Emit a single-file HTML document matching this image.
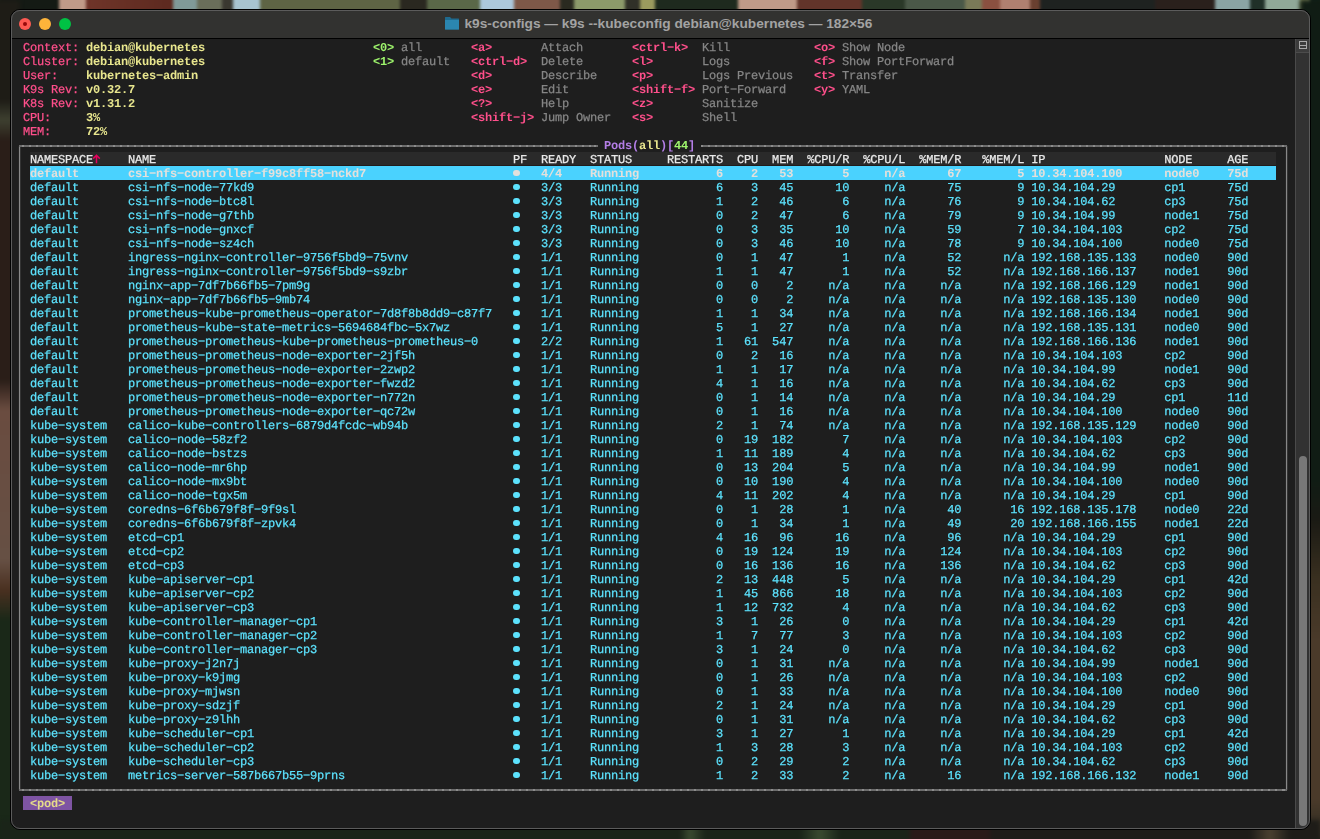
<!DOCTYPE html>
<html><head><meta charset="utf-8">
<style>
html,body{margin:0;padding:0;width:1320px;height:839px;overflow:hidden;background:#1a2418;position:relative;}
.a{position:absolute;}
.topstrip{left:0;top:-6px;width:1320px;height:26px;filter:blur(1.5px);background:linear-gradient(to right,
#141a14 0px,#141a14 59px,#c09a88 59px,#c09a88 86px,#6a2e26 86px,#6e3428 90px,#5e2a20 165px,#5e2a20 173px,#809a98 173px,#809a98 197px,#6a6e5a 197px,#6a6e5a 222px,#3a3830 222px,#3a3830 233px,#a8c4d0 233px,#a8c4d0 260px,#5e6444 260px,#5e6444 400px,#2a2820 400px,#2a2820 427px,#5a6848 427px,#5a6848 480px,#acc8dc 480px,#acc8dc 514px,#7e5848 514px,#7e5848 560px,#2a2a20 560px,#2a2a20 574px,#8c9a6a 574px,#8c9a6a 625px,#303028 625px,#303028 640px,#9a9a5e 640px,#9a9a5e 655px,#1e2a1e 655px,#1e2a1e 738px,#c09a88 738px,#c09a88 797px,#62342a 797px,#62342a 862px,#2a3828 862px,#2a3828 905px,#4a5848 905px,#4a5848 965px,#7a7a58 965px,#7a7a58 982px,#8a5040 982px,#8a5040 1000px,#b08070 1000px,#b08070 1030px,#6a4030 1030px,#6a4030 1040px,#1e2220 1040px,#1e2220 1155px,#2a201c 1155px,#2a201c 1215px,#8aa4a4 1215px,#8aa4a4 1250px,#203028 1250px,#203028 1265px,#90a898 1265px,#90a898 1300px,#80885a 1300px,#80885a 1310px,#102018 1310px);}
.leftstrip{left:-6px;top:0;width:26px;height:839px;filter:blur(2px);background:linear-gradient(to bottom,#1e1c16 0px,#1e1c16 100px,#3e4030 120px,#2a1e18 140px,#2a1e18 380px,#6a4c40 410px,#665044 560px,#4a3020 590px,#1a2818 620px,#1a2818 839px);}
.rightstrip{left:1300px;top:0;width:26px;height:839px;filter:blur(2px);background:linear-gradient(to bottom,#101c14 0px,#101c14 480px,#1a1a14 520px,#3a3020 580px,#4a3a2a 640px,#4a3a2a 800px,#2a2a20 839px);}
.botstrip{left:0;top:820px;width:1320px;height:26px;filter:blur(2px);background:linear-gradient(to right,#1a2418 0px,#1a2418 680px,#3a4a30 690px,#1a2418 705px,#1a2418 800px,#3a4a30 820px,#1a2418 840px,#1a2418 910px,#2a1a18 910px,#2a1a18 990px,#1e1c18 990px,#1e1c18 1250px,#4a4030 1270px,#1e1c18 1290px);}
.win{left:10px;top:9px;width:1301px;height:821px;border-radius:10px;background:#1e1e1e;border:1px solid #000;box-sizing:border-box;overflow:hidden;}
.winhl{left:11px;top:10px;width:1299px;height:819px;border-radius:9px;border:1px solid #5c5c5c;box-sizing:border-box;}
.tb{left:11px;top:10px;width:1299px;height:28px;background:#323230;border-radius:9px 9px 0 0;}
.tbsep{left:11px;top:38px;width:1299px;height:1px;background:#000;}
.dot{top:17.75px;width:12.5px;height:12.5px;border-radius:50%;}
.title{left:464.5px;top:15px;font-family:"Liberation Sans",sans-serif;font-weight:bold;font-size:13.7px;color:#a3a3a3;white-space:pre;line-height:18px;}
.r{position:absolute;height:14px;line-height:14px;padding-top:1px;box-sizing:border-box;font-family:"Liberation Mono",monospace;font-size:12px;letter-spacing:-0.2px;white-space:pre;text-rendering:geometricPrecision;color:#5ce2fd;}
.r{-webkit-text-stroke:0.25px currentColor;}
.b{font-weight:bold;-webkit-text-stroke:0;}
.pk{color:#ff4f8b;}
.pk2{color:#e0207a;}
.yl{color:#e8e68e;}
.gn{color:#9ef46c;}
.gy{color:#868686;}
.pu{color:#b47ee6;}
.cy{color:#5ce2fd;}
.hd{background:linear-gradient(#2a2a2a 0,#2a2a2a 13px,#211c1c 13px);color:#e8e8e8;width:1246px;}
.sel{background:#4ad2fe;color:#e4e0dc;width:1246px;}
.pod{background:#7e54a3;color:#e6dc8a;width:49px;}
.bul{left:513.25px;width:6.5px;height:6.5px;border-radius:50%;background:#5ce2fd;}
.bs{background:#e4e0dc;}
.fl{background:linear-gradient(to right,#262626 0,#262626 1px,#888 1px,#888 2px,#343434 2px);}
.flh{background:repeating-linear-gradient(to right,#8c8c8c 0,#8c8c8c 2px,#6c6c6c 2px,#6c6c6c 7px);}
.sbtrack{left:1295px;top:39px;width:15px;height:790px;border-bottom-right-radius:10px;background:#323232;border-left:1px solid #4a4a4a;box-sizing:border-box;}
.sbbtn{left:1296px;top:39px;width:13px;height:13px;background:#3c3c3c;border-bottom:1px solid #4c4c4c;box-sizing:content-box;}
.sbicon{left:1299px;top:41px;width:8px;height:8px;border:1px solid #a8a8a8;box-sizing:border-box;}
.sbthumb{left:1299px;top:456px;width:8px;height:370px;border-radius:4px;background:#787878;}
</style></head><body>
<div class="a topstrip"></div>
<div class="a leftstrip"></div>
<div class="a rightstrip"></div>
<div class="a botstrip"></div>
<div class="a win"></div>
<div class="a tb"></div>
<div class="a tbsep"></div>
<div class="a dot" style="left:18.75px;background:#fe5a52;"></div>
<div class="a" style="left:23px;top:22px;width:4px;height:4px;border-radius:50%;background:#98090b;"></div>
<div class="a dot" style="left:38.75px;background:#fdb43a;"></div>
<div class="a dot" style="left:58.75px;background:#00c244;"></div>
<svg class="a" style="left:444px;top:16px" width="16" height="14" viewBox="0 0 16 14">
  <path d="M1 1.5 Q1 1 1.5 1 L6 1 L7.5 2.5 L14.5 2.5 Q15 2.5 15 3 L15 13 Q15 13.5 14.5 13.5 L1.5 13.5 Q1 13.5 1 13 Z" fill="#1f6a8e"/>
  <path d="M1 4 L15 4 L15 13 Q15 13.5 14.5 13.5 L1.5 13.5 Q1 13.5 1 13 Z" fill="#2b86b0"/>
</svg>
<div class="a title">k9s-configs — k9s --kubeconfig debian@kubernetes — 182×56</div>
<div class="a sbtrack"></div>
<div class="a sbbtn"></div>
<div class="a sbicon"><div class="a" style="left:0;top:3px;width:6px;height:1px;background:#a8a8a8"></div></div>
<div class="a sbthumb"></div>
<!-- frame -->
<div class="a fl" style="left:18px;top:146px;width:3px;height:644px;"></div>
<div class="a fl" style="left:1285px;top:146px;width:3px;height:644px;"></div>
<div class="a flh" style="left:19px;top:145px;width:579px;height:2px;background-position:-4px 0"></div>
<div class="a flh" style="left:701px;top:145px;width:586px;height:2px;background-position:0 0"></div>
<div class="a flh" style="left:19px;top:789px;width:1268px;height:2px;background-position:-4px 0"></div>
<div class="a" style="left:0;top:0;width:1320px;height:839px;will-change:transform">
<div class="r " style="top:40px;left:23px"><span class="pk">Context: </span><span class="yl b">debian@kubernetes</span></div>
<div class="r " style="top:54px;left:23px"><span class="pk">Cluster: </span><span class="yl b">debian@kubernetes</span></div>
<div class="r " style="top:68px;left:23px"><span class="pk">User:    </span><span class="yl b">kubernetes−admin</span></div>
<div class="r " style="top:82px;left:23px"><span class="pk">K9s Rev: </span><span class="yl b">v0.32.7</span></div>
<div class="r " style="top:96px;left:23px"><span class="pk">K8s Rev: </span><span class="yl b">v1.31.2</span></div>
<div class="r " style="top:110px;left:23px"><span class="pk">CPU:     </span><span class="yl b">3%</span></div>
<div class="r " style="top:124px;left:23px"><span class="pk">MEM:     </span><span class="yl b">72%</span></div>
<div class="r " style="top:40px;left:373px"><span class="gn b">&lt;0&gt;</span> <span class="gy">all</span></div>
<div class="r " style="top:54px;left:373px"><span class="gn b">&lt;1&gt;</span> <span class="gy">default</span></div>
<div class="r " style="top:40px;left:471px"><span class="pk b">&lt;a&gt;       </span><span class="gy">Attach</span></div>
<div class="r " style="top:54px;left:471px"><span class="pk b">&lt;ctrl−d&gt;  </span><span class="gy">Delete</span></div>
<div class="r " style="top:68px;left:471px"><span class="pk b">&lt;d&gt;       </span><span class="gy">Describe</span></div>
<div class="r " style="top:82px;left:471px"><span class="pk b">&lt;e&gt;       </span><span class="gy">Edit</span></div>
<div class="r " style="top:96px;left:471px"><span class="pk b">&lt;?&gt;       </span><span class="gy">Help</span></div>
<div class="r " style="top:110px;left:471px"><span class="pk b">&lt;shift−j&gt; </span><span class="gy">Jump Owner</span></div>
<div class="r " style="top:40px;left:632px"><span class="pk b">&lt;ctrl−k&gt;  </span><span class="gy">Kill</span></div>
<div class="r " style="top:54px;left:632px"><span class="pk b">&lt;l&gt;       </span><span class="gy">Logs</span></div>
<div class="r " style="top:68px;left:632px"><span class="pk b">&lt;p&gt;       </span><span class="gy">Logs Previous</span></div>
<div class="r " style="top:82px;left:632px"><span class="pk b">&lt;shift−f&gt; </span><span class="gy">Port−Forward</span></div>
<div class="r " style="top:96px;left:632px"><span class="pk b">&lt;z&gt;       </span><span class="gy">Sanitize</span></div>
<div class="r " style="top:110px;left:632px"><span class="pk b">&lt;s&gt;       </span><span class="gy">Shell</span></div>
<div class="r " style="top:40px;left:814px"><span class="pk b">&lt;o&gt;</span> <span class="gy">Show Node</span></div>
<div class="r " style="top:54px;left:814px"><span class="pk b">&lt;f&gt;</span> <span class="gy">Show PortForward</span></div>
<div class="r " style="top:68px;left:814px"><span class="pk b">&lt;t&gt;</span> <span class="gy">Transfer</span></div>
<div class="r " style="top:82px;left:814px"><span class="pk b">&lt;y&gt;</span> <span class="gy">YAML</span></div>
<div class="r " style="top:138px;left:604px"><span class="pu b">Pods(</span><span class="yl b">all</span><span class="pu b">)[</span><span class="gn b">44</span><span class="pu b">]</span></div>
<div class="r hd" style="top:152px;left:30px">NAMESPACE     NAME                                                   PF  READY  STATUS     RESTARTS  CPU  MEM  %CPU/R  %CPU/L  %MEM/R   %MEM/L IP                 NODE     AGE    </div>
<svg class="a" style="left:92px;top:154px" width="9" height="10" viewBox="0 0 9 10"><path d="M4.5 1.2V9.2M1.2 4.6L4.5 1.3L7.8 4.6" stroke="#e5005c" stroke-width="1.5" fill="none"/></svg>
<div class="r sel b" style="top:166px;left:30px">default       csi−nfs−controller−f99c8ff58−nckd7                         4/4    Running           6    2   53       5     n/a      67        5 10.34.104.100      node0    75d    </div>
<div class="a bul bs" style="top:169.5px"></div>
<div class="r cy" style="top:180px;left:30px">default       csi−nfs−node−77kd9                                         3/3    Running           6    3   45      10     n/a      75        9 10.34.104.29       cp1      75d    </div>
<div class="a bul " style="top:183.5px"></div>
<div class="r cy" style="top:194px;left:30px">default       csi−nfs−node−btc8l                                         3/3    Running           1    2   46       6     n/a      76        9 10.34.104.62       cp3      75d    </div>
<div class="a bul " style="top:197.5px"></div>
<div class="r cy" style="top:208px;left:30px">default       csi−nfs−node−g7thb                                         3/3    Running           0    2   47       6     n/a      79        9 10.34.104.99       node1    75d    </div>
<div class="a bul " style="top:211.5px"></div>
<div class="r cy" style="top:222px;left:30px">default       csi−nfs−node−gnxcf                                         3/3    Running           0    3   35      10     n/a      59        7 10.34.104.103      cp2      75d    </div>
<div class="a bul " style="top:225.5px"></div>
<div class="r cy" style="top:236px;left:30px">default       csi−nfs−node−sz4ch                                         3/3    Running           0    3   46      10     n/a      78        9 10.34.104.100      node0    75d    </div>
<div class="a bul " style="top:239.5px"></div>
<div class="r cy" style="top:250px;left:30px">default       ingress−nginx−controller−9756f5bd9−75vnv                   1/1    Running           0    1   47       1     n/a      52      n/a 192.168.135.133    node0    90d    </div>
<div class="a bul " style="top:253.5px"></div>
<div class="r cy" style="top:264px;left:30px">default       ingress−nginx−controller−9756f5bd9−s9zbr                   1/1    Running           1    1   47       1     n/a      52      n/a 192.168.166.137    node1    90d    </div>
<div class="a bul " style="top:267.5px"></div>
<div class="r cy" style="top:278px;left:30px">default       nginx−app−7df7b66fb5−7pm9g                                 1/1    Running           0    0    2     n/a     n/a     n/a      n/a 192.168.166.129    node1    90d    </div>
<div class="a bul " style="top:281.5px"></div>
<div class="r cy" style="top:292px;left:30px">default       nginx−app−7df7b66fb5−9mb74                                 1/1    Running           0    0    2     n/a     n/a     n/a      n/a 192.168.135.130    node0    90d    </div>
<div class="a bul " style="top:295.5px"></div>
<div class="r cy" style="top:306px;left:30px">default       prometheus−kube−prometheus−operator−7d8f8b8dd9−c87f7       1/1    Running           1    1   34     n/a     n/a     n/a      n/a 192.168.166.134    node1    90d    </div>
<div class="a bul " style="top:309.5px"></div>
<div class="r cy" style="top:320px;left:30px">default       prometheus−kube−state−metrics−5694684fbc−5x7wz             1/1    Running           5    1   27     n/a     n/a     n/a      n/a 192.168.135.131    node0    90d    </div>
<div class="a bul " style="top:323.5px"></div>
<div class="r cy" style="top:334px;left:30px">default       prometheus−prometheus−kube−prometheus−prometheus−0         2/2    Running           1   61  547     n/a     n/a     n/a      n/a 192.168.166.136    node1    90d    </div>
<div class="a bul " style="top:337.5px"></div>
<div class="r cy" style="top:348px;left:30px">default       prometheus−prometheus−node−exporter−2jf5h                  1/1    Running           0    2   16     n/a     n/a     n/a      n/a 10.34.104.103      cp2      90d    </div>
<div class="a bul " style="top:351.5px"></div>
<div class="r cy" style="top:362px;left:30px">default       prometheus−prometheus−node−exporter−2zwp2                  1/1    Running           1    1   17     n/a     n/a     n/a      n/a 10.34.104.99       node1    90d    </div>
<div class="a bul " style="top:365.5px"></div>
<div class="r cy" style="top:376px;left:30px">default       prometheus−prometheus−node−exporter−fwzd2                  1/1    Running           4    1   16     n/a     n/a     n/a      n/a 10.34.104.62       cp3      90d    </div>
<div class="a bul " style="top:379.5px"></div>
<div class="r cy" style="top:390px;left:30px">default       prometheus−prometheus−node−exporter−n772n                  1/1    Running           0    1   14     n/a     n/a     n/a      n/a 10.34.104.29       cp1      11d    </div>
<div class="a bul " style="top:393.5px"></div>
<div class="r cy" style="top:404px;left:30px">default       prometheus−prometheus−node−exporter−qc72w                  1/1    Running           0    1   16     n/a     n/a     n/a      n/a 10.34.104.100      node0    90d    </div>
<div class="a bul " style="top:407.5px"></div>
<div class="r cy" style="top:418px;left:30px">kube−system   calico−kube−controllers−6879d4fcdc−wb94b                   1/1    Running           2    1   74     n/a     n/a     n/a      n/a 192.168.135.129    node0    90d    </div>
<div class="a bul " style="top:421.5px"></div>
<div class="r cy" style="top:432px;left:30px">kube−system   calico−node−58zf2                                          1/1    Running           0   19  182       7     n/a     n/a      n/a 10.34.104.103      cp2      90d    </div>
<div class="a bul " style="top:435.5px"></div>
<div class="r cy" style="top:446px;left:30px">kube−system   calico−node−bstzs                                          1/1    Running           1   11  189       4     n/a     n/a      n/a 10.34.104.62       cp3      90d    </div>
<div class="a bul " style="top:449.5px"></div>
<div class="r cy" style="top:460px;left:30px">kube−system   calico−node−mr6hp                                          1/1    Running           0   13  204       5     n/a     n/a      n/a 10.34.104.99       node1    90d    </div>
<div class="a bul " style="top:463.5px"></div>
<div class="r cy" style="top:474px;left:30px">kube−system   calico−node−mx9bt                                          1/1    Running           0   10  190       4     n/a     n/a      n/a 10.34.104.100      node0    90d    </div>
<div class="a bul " style="top:477.5px"></div>
<div class="r cy" style="top:488px;left:30px">kube−system   calico−node−tgx5m                                          1/1    Running           4   11  202       4     n/a     n/a      n/a 10.34.104.29       cp1      90d    </div>
<div class="a bul " style="top:491.5px"></div>
<div class="r cy" style="top:502px;left:30px">kube−system   coredns−6f6b679f8f−9f9sl                                   1/1    Running           0    1   28       1     n/a      40       16 192.168.135.178    node0    22d    </div>
<div class="a bul " style="top:505.5px"></div>
<div class="r cy" style="top:516px;left:30px">kube−system   coredns−6f6b679f8f−zpvk4                                   1/1    Running           0    1   34       1     n/a      49       20 192.168.166.155    node1    22d    </div>
<div class="a bul " style="top:519.5px"></div>
<div class="r cy" style="top:530px;left:30px">kube−system   etcd−cp1                                                   1/1    Running           4   16   96      16     n/a      96      n/a 10.34.104.29       cp1      90d    </div>
<div class="a bul " style="top:533.5px"></div>
<div class="r cy" style="top:544px;left:30px">kube−system   etcd−cp2                                                   1/1    Running           0   19  124      19     n/a     124      n/a 10.34.104.103      cp2      90d    </div>
<div class="a bul " style="top:547.5px"></div>
<div class="r cy" style="top:558px;left:30px">kube−system   etcd−cp3                                                   1/1    Running           0   16  136      16     n/a     136      n/a 10.34.104.62       cp3      90d    </div>
<div class="a bul " style="top:561.5px"></div>
<div class="r cy" style="top:572px;left:30px">kube−system   kube−apiserver−cp1                                         1/1    Running           2   13  448       5     n/a     n/a      n/a 10.34.104.29       cp1      42d    </div>
<div class="a bul " style="top:575.5px"></div>
<div class="r cy" style="top:586px;left:30px">kube−system   kube−apiserver−cp2                                         1/1    Running           1   45  866      18     n/a     n/a      n/a 10.34.104.103      cp2      90d    </div>
<div class="a bul " style="top:589.5px"></div>
<div class="r cy" style="top:600px;left:30px">kube−system   kube−apiserver−cp3                                         1/1    Running           1   12  732       4     n/a     n/a      n/a 10.34.104.62       cp3      90d    </div>
<div class="a bul " style="top:603.5px"></div>
<div class="r cy" style="top:614px;left:30px">kube−system   kube−controller−manager−cp1                                1/1    Running           3    1   26       0     n/a     n/a      n/a 10.34.104.29       cp1      42d    </div>
<div class="a bul " style="top:617.5px"></div>
<div class="r cy" style="top:628px;left:30px">kube−system   kube−controller−manager−cp2                                1/1    Running           1    7   77       3     n/a     n/a      n/a 10.34.104.103      cp2      90d    </div>
<div class="a bul " style="top:631.5px"></div>
<div class="r cy" style="top:642px;left:30px">kube−system   kube−controller−manager−cp3                                1/1    Running           3    1   24       0     n/a     n/a      n/a 10.34.104.62       cp3      90d    </div>
<div class="a bul " style="top:645.5px"></div>
<div class="r cy" style="top:656px;left:30px">kube−system   kube−proxy−j2n7j                                           1/1    Running           0    1   31     n/a     n/a     n/a      n/a 10.34.104.99       node1    90d    </div>
<div class="a bul " style="top:659.5px"></div>
<div class="r cy" style="top:670px;left:30px">kube−system   kube−proxy−k9jmg                                           1/1    Running           0    1   26     n/a     n/a     n/a      n/a 10.34.104.103      cp2      90d    </div>
<div class="a bul " style="top:673.5px"></div>
<div class="r cy" style="top:684px;left:30px">kube−system   kube−proxy−mjwsn                                           1/1    Running           0    1   33     n/a     n/a     n/a      n/a 10.34.104.100      node0    90d    </div>
<div class="a bul " style="top:687.5px"></div>
<div class="r cy" style="top:698px;left:30px">kube−system   kube−proxy−sdzjf                                           1/1    Running           2    1   24     n/a     n/a     n/a      n/a 10.34.104.29       cp1      90d    </div>
<div class="a bul " style="top:701.5px"></div>
<div class="r cy" style="top:712px;left:30px">kube−system   kube−proxy−z9lhh                                           1/1    Running           0    1   31     n/a     n/a     n/a      n/a 10.34.104.62       cp3      90d    </div>
<div class="a bul " style="top:715.5px"></div>
<div class="r cy" style="top:726px;left:30px">kube−system   kube−scheduler−cp1                                         1/1    Running           3    1   27       1     n/a     n/a      n/a 10.34.104.29       cp1      42d    </div>
<div class="a bul " style="top:729.5px"></div>
<div class="r cy" style="top:740px;left:30px">kube−system   kube−scheduler−cp2                                         1/1    Running           1    3   28       3     n/a     n/a      n/a 10.34.104.103      cp2      90d    </div>
<div class="a bul " style="top:743.5px"></div>
<div class="r cy" style="top:754px;left:30px">kube−system   kube−scheduler−cp3                                         1/1    Running           0    2   29       2     n/a     n/a      n/a 10.34.104.62       cp3      90d    </div>
<div class="a bul " style="top:757.5px"></div>
<div class="r cy" style="top:768px;left:30px">kube−system   metrics−server−587b667b55−9prns                            1/1    Running           1    2   33       2     n/a      16      n/a 192.168.166.132    node1    90d    </div>
<div class="a bul " style="top:771.5px"></div>
<div class="r pod" style="top:796px;left:23px"><span class="b"> &lt;pod&gt; </span></div>
</div>
<div class="a winhl"></div>
</body></html>
